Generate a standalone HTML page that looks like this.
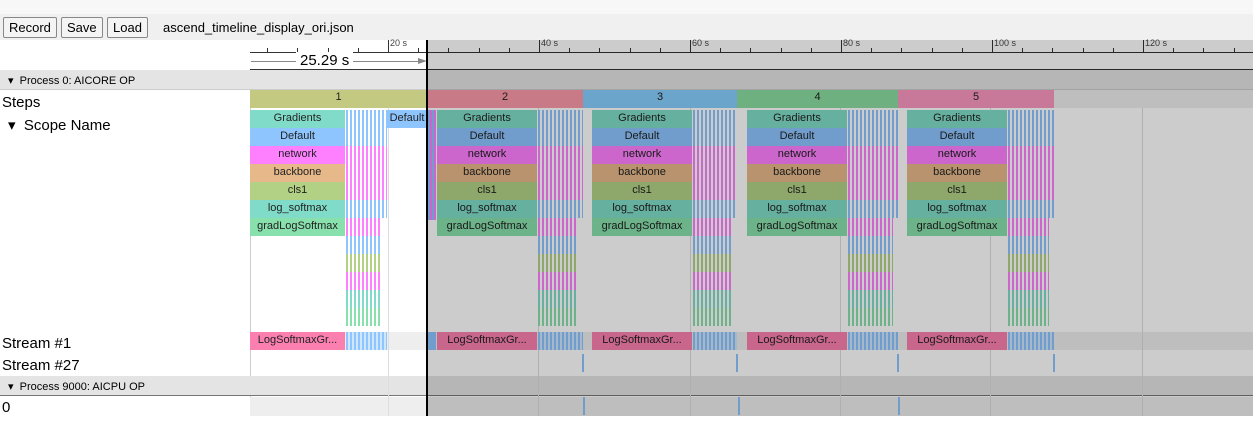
<!DOCTYPE html>
<html><head><style>
*{margin:0;padding:0;box-sizing:border-box}
body{width:1253px;height:431px;overflow:hidden;background:#fff;font-family:"Liberation Sans","DejaVu Sans",sans-serif;position:relative}
.a{position:absolute}
.blk{position:absolute;height:18px;font-size:11px;line-height:16px;text-align:center;color:#222;overflow:hidden;white-space:nowrap}
.btn{position:absolute;top:17px;height:21px;border:1px solid #888;border-radius:2px;background:#f4f4f4;font-size:13px;line-height:19px;padding:0 5px;color:#000}
.lbl{position:absolute;left:2px;font-size:15px;color:#000}
</style></head><body>
<div class="a" style="left:0;top:0;width:1253px;height:14px;background:#f7f7f7"></div>
<div class="a" style="left:0;top:14px;width:1253px;height:26px;background:#f0f0f0"></div>
<div class="btn" style="left:3px">Record</div>
<div class="btn" style="left:61px">Save</div>
<div class="btn" style="left:107px">Load</div>
<div class="a" style="left:163px;top:20px;font-size:13px">ascend_timeline_display_ori.json</div>
<div class="a" style="left:250px;top:40px;width:1003px;height:30px;background:#fff"></div>
<div id="ruler"></div>
<div class="a" style="left:250px;top:52px;width:1003px;height:1px;background:#333"></div>
<div class="a" style="left:250px;top:69px;width:1003px;height:1px;background:#333"></div>
<div class="a" style="left:251px;top:61px;width:172px;height:1px;background:#888"></div>
<div class="a" style="left:418px;top:58px;width:0;height:0;border-left:9px solid #888;border-top:3px solid transparent;border-bottom:3px solid transparent"></div>
<div class="a" style="left:296px;top:52px;background:#fff;padding:0 4px;font-size:15px">25.29 s</div>
<div class="a" style="left:0;top:70px;width:1253px;height:20px;background:#e4e4e4;border-bottom:1px solid #ccc"></div>
<div class="a" style="left:8px;top:74px;font-size:11px">▾ &nbsp;Process 0: AICORE OP</div>
<div class="a" style="left:250px;top:90px;width:1px;height:326px;background:#ccc"></div>
<div class="lbl" style="top:94px">Steps</div>
<div class="lbl" style="top:116px;left:8px">▾ &nbsp;Scope Name</div>
<div class="lbl" style="top:335px">Stream #1</div>
<div class="lbl" style="top:357px">Stream #27</div>
<div class="a" style="left:0;top:376px;width:1253px;height:20px;background:#e4e4e4;border-bottom:1px solid #777"></div>
<div class="a" style="left:8px;top:380px;font-size:11px">▾ &nbsp;Process 9000: AICPU OP</div>
<div class="lbl" style="top:399px">0</div>
<div class="a" style="left:250px;top:397px;width:1003px;height:19px;background:#eee"></div>
<div class="a" style="left:250px;top:332px;width:1003px;height:18px;background:#eee"></div>
<div id="c"></div>
<div class="a" style="left:427px;top:40px;width:826px;height:376px;background:rgba(0,0,0,.2)"></div>
<div class="a" style="left:426px;top:40px;width:2px;height:376px;background:#000"></div>
<script>
var h='';
function d(x,y,w,hh,bg,t,cls){h+='<div class="'+(cls||'a')+'" style="left:'+x+'px;top:'+y+'px;width:'+w+'px;height:'+hh+'px;background:'+bg+'">'+(t||'')+'</div>';}
var r='';
for(var s=0;s<=132;s+=4){var x=237+s*7.55;if(x<250)continue;var maj=(s%20==0);r+='<div class="a" style="left:'+Math.round(x)+'px;top:'+(maj?40:48)+'px;width:1px;height:'+(maj?12:4)+'px;background:#333"></div>';if(maj&&s>0)r+='<div class="a" style="left:'+(Math.round(x)+2)+'px;top:38px;font-size:9px;color:#444">'+s+' s</div>';}
document.getElementById('ruler').innerHTML=r;
[388,538,690,840,990,1142].forEach(function(x){d(x,90,1,326,'#ddd');});
var steps=[[250,427,'#c4c982','1'],[427,583,'#fb9aa9','2'],[583,737,'#86cfff','3'],[737,898,'#8adc9f','4'],[898,1054,'#fb98c0','5']];
steps.forEach(function(s){h+='<div class="blk" style="left:'+s[0]+'px;top:90px;width:'+(s[1]-s[0])+'px;background:'+s[2]+';line-height:15px">'+s[3]+'</div>';});
d(1054,90,199,18,'#eee');
var names=['Gradients','Default','network','backbone','cls1','log_softmax','gradLogSoftmax'];
var cols=['#80dcc8','#8ec5ff','#ff80ff','#e6b88a','#b2d185','#80dcc8','#88e0ac'];
var bl=[[250,345,387],[437,537,583],[592,692,737],[747,847,898],[907,1007,1054]];
bl.forEach(function(b,i){
 for(var k=0;k<7;k++){h+='<div class="blk" style="left:'+b[0]+'px;top:'+(110+k*18)+'px;width:'+(b[1]-b[0])+'px;background:'+cols[k]+'">'+names[k]+'</div>';}
 var sc=['#8ec5ff','#8ec5ff','#ff80ff','#ff80ff','#ff80ff','#8ec5ff','#ff80ff','#8ec5ff','#b2d185','#ff80ff','#80dcc8','#88e0ac'];
 for(var k=0;k<12;k++){var y=110+k*18;h+='<div class="a" style="left:'+(b[1]+1)+'px;top:'+y+'px;width:'+(b[2]-b[1]-(k>5?6:1))+'px;height:18px;background:repeating-linear-gradient(90deg,'+sc[k]+' 0 2px,rgba(255,255,255,.6) 2px 4px)"></div>';}
 h+='<div class="blk" style="left:'+b[0]+'px;top:332px;width:'+(b[1]-b[0])+'px;background:#fb80b0">LogSoftmaxGr...</div>';
 h+='<div class="a" style="left:'+(b[1]+1)+'px;top:332px;width:'+(b[2]-b[1]-1)+'px;height:18px;background:repeating-linear-gradient(90deg,#8ec5ff 0 2px,#cfe6ff 2px 4px)"></div>';
 if(i>0){d(b[2]-1,354,2,18,'#8ec5ff');}
});
h+='<div class="blk" style="left:387px;top:110px;width:40px;background:#8ec5ff">Default</div>';
d(428,110,8,110,'repeating-linear-gradient(90deg,#8ec5ff 0 2px,#ff80ff 2px 4px)');
d(428,332,8,18,'#8ec5ff');
d(583,397,2,18,'#8ec5ff');d(738,397,2,18,'#8ec5ff');d(898,397,2,18,'#8ec5ff');
document.getElementById('c').innerHTML=h;
</script>
</body></html>
